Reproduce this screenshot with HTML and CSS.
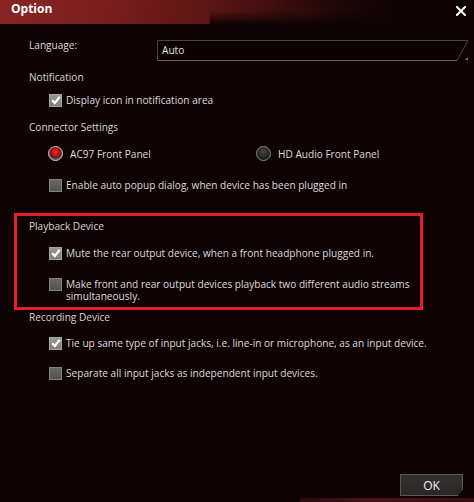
FILE: index.html
```html
<!DOCTYPE html>
<html lang="en">
<head>
    <meta charset="UTF-8">
    <meta name="viewport" content="width=device-width, initial-scale=1.0">
    <title>Option</title>
    <link rel="stylesheet" href="styles.css">
</head>
<body>
    <div class="dialog">
        <div class="titlebar">
            <span class="title">Option</span>
            <svg class="close" width="10" height="10" viewBox="0 0 10 10">
                <path d="M1 1 L9 9 M9 1 L1 9" stroke="#fff" stroke-width="2" stroke-linecap="square"/>
            </svg>
        </div>

        <div class="content">
            <div class="lang-row">
                <span class="label">Language:</span>
                <div class="select">
                    <svg class="select-frame" width="312" height="21" viewBox="0 0 312 21">
                        <defs>
                            <linearGradient id="topline" x1="0" x2="1" y1="0" y2="0">
                                <stop offset="0" stop-color="#6b6262"/>
                                <stop offset="0.45" stop-color="#6b6262"/>
                                <stop offset="0.5" stop-color="#3a3030"/>
                                <stop offset="1" stop-color="#3a3030"/>
                            </linearGradient>
                        </defs>
                        <path d="M0.5 20.5 V0.5 H311 L300 20.5 Z" fill="#0c0203" stroke="#4a4242"/>
                        <path d="M0.5 0.5 H311" stroke="url(#topline)"/>
                        <path d="M1 20.5 H300" stroke="#6a6262"/>
                        <path d="M311 17 V20 H308 Z" fill="#7a7272"/>
                    </svg>
                    <span class="select-value">Auto</span>
                </div>
            </div>

            <div class="heading">Notification</div>
            <div class="check-row checked row-display">
                <span class="box"><svg width="12" height="12" viewBox="0 0 12 12"><path d="M2.2 6.2 L4.8 9 L9.8 2.8" fill="none" stroke="#fff" stroke-width="2.2"/></svg></span>
                <span>Display icon in notification area</span>
            </div>

            <div class="heading heading-connector">Connector Settings</div>
            <div class="radio-row">
                <div class="radio-item first">
                    <span class="radio on"></span>
                    <span>AC97 Front Panel</span>
                </div>
                <div class="radio-item">
                    <span class="radio"></span>
                    <span>HD Audio Front Panel</span>
                </div>
            </div>
            <div class="check-row row-popup">
                <span class="box"></span>
                <span>Enable auto popup dialog, when device has been plugged in</span>
            </div>

            <div class="highlight">
                <div class="heading">Playback Device</div>
                <div class="check-row checked row-mute">
                    <span class="box"><svg width="12" height="12" viewBox="0 0 12 12"><path d="M2.2 6.2 L4.8 9 L9.8 2.8" fill="none" stroke="#fff" stroke-width="2.2"/></svg></span>
                    <span>Mute the rear output device, when a front headphone plugged in.</span>
                </div>
                <div class="check-row multi row-streams">
                    <span class="box"></span>
                    <span>Make front and rear output devices playback two different audio streams simultaneously.</span>
                </div>
            </div>

            <div class="heading heading-recording">Recording Device</div>
            <div class="check-row checked row-tie">
                <span class="box"><svg width="12" height="12" viewBox="0 0 12 12"><path d="M2.2 6.2 L4.8 9 L9.8 2.8" fill="none" stroke="#fff" stroke-width="2.2"/></svg></span>
                <span>Tie up same type of input jacks, i.e. line-in or microphone, as an input device.</span>
            </div>
            <div class="check-row row-separate">
                <span class="box"></span>
                <span>Separate all input jacks as independent input devices.</span>
            </div>
        </div>

        <div class="footer">
            <button class="ok-btn">OK</button>
        </div>
        <div class="bottom-edge"></div>
    </div>
</body>
</html>
```

FILE: styles.css
```css
body {
    margin: 0;
    background-color: #100304;
    font-family: "Open Sans", "Noto Sans", sans-serif;
    color: #dcdada;
}

.dialog {
    width: 474px;
    height: 502px;
    display: flex;
    flex-direction: column;
    background-color: #100304;
    overflow: hidden;
}

/* title bar */
.titlebar {
    height: 24px;
    flex-shrink: 0;
    display: flex;
    align-items: flex-start;
    justify-content: space-between;
    padding: 0 8px 0 11px;
    background:
        linear-gradient(to bottom, rgba(16, 3, 4, 0) 45%, #100304 100%) 210px 0 / 100% 100% no-repeat,
        linear-gradient(100deg, #8a2424 0%, #781e1e 25%, #601616 42%, #3e0e0e 58%, #1c0606 72%, #100304 82%);
}

.title {
    font-size: 12px;
    font-weight: bold;
    color: #fff;
    line-height: 18px;
}

.close {
    margin-top: 6px;
}

/* main area */
.content {
    flex: 1;
    padding-top: 14px;
    font-size: 10.1px;
    line-height: 14px;
}

.lang-row {
    display: flex;
    padding-left: 29px;
}

.label {
    width: 128px;
}

.select {
    position: relative;
    width: 312px;
    height: 21px;
    margin-top: 2px;
}

.select-frame {
    position: absolute;
    left: 0;
    top: 0;
}

.select-value {
    position: relative;
    display: block;
    padding-left: 5px;
    line-height: 21px;
    color: #e2e0e0;
}

.heading {
    padding-left: 29px;
    color: #d6d4d4;
    margin-top: 9px;
}

.heading-connector {
    margin-top: 13px;
}

.heading-recording {
    margin-top: 0;
}

/* checkbox rows */
.check-row {
    display: flex;
    align-items: flex-start;
    padding-left: 49px;
    gap: 4px;
}

.check-row .box {
    width: 11px;
    height: 11px;
    margin-top: 1px;
    flex-shrink: 0;
    border: 1px solid #858080;
    background: linear-gradient(#6a6666, #565252);
    position: relative;
}

.check-row.checked .box {
    background: linear-gradient(#9a9696, #807c7c);
    border-color: #a8a4a4;
}

.check-row .box svg {
    position: absolute;
    left: 0;
    top: -1px;
}

.check-row.multi {
    line-height: 12px;
}

.check-row.multi .box {
    margin-top: 0;
}

.row-display { margin-top: 9px; }
.row-popup { margin-top: 17px; }
.row-mute { margin-top: 13px; }
.row-streams { margin-top: 18px; }
.row-tie { margin-top: 12px; }
.row-separate { margin-top: 16px; }

/* radio buttons */
.radio-row {
    display: flex;
    padding-left: 48px;
    margin-top: 12px;
}

.radio-item {
    display: flex;
    align-items: center;
    gap: 7px;
}

.radio-item.first {
    width: 208px;
}

.radio {
    width: 13px;
    height: 13px;
    border-radius: 50%;
    border: 1px solid #8a8585;
    background: radial-gradient(circle at 50% 35%, #4a4545, #1c1818 75%);
}

.radio.on {
    border: 1px solid #d0cccc;
    background:
        radial-gradient(circle at 50% 40%, #f03030 0, #c41414 3px, #a00c0c 5px, #3a2a2a 5.5px, #5a5050 6.5px);
}

/* red highlight box */
.highlight {
    margin: 21px 0 0 14px;
    width: 403px;
    border: 3px solid #e31f2b;
    padding: 3px 0 5px;
}

.highlight .heading {
    padding-left: 12px;
    margin-top: 0;
}

.highlight .check-row {
    padding-left: 32px;
}

/* footer */
.footer {
    display: flex;
    justify-content: flex-end;
    padding: 0 11px 2px 0;
}

.ok-btn {
    width: 63px;
    height: 22px;
    border: 1px solid #5a5454;
    background: linear-gradient(#353030, #2a2626);
    color: #f0eeee;
    font-family: "Open Sans", "Noto Sans", sans-serif;
    font-size: 12px;
    padding: 0;
    clip-path: polygon(0 0, 100% 0, 100% 70%, 92% 100%, 0 100%);
}

.bottom-edge {
    height: 4px;
    margin-left: 300px;
    background: linear-gradient(to right, #2a0a0c, #4a1418 40%, #3a0e10);
}
```
